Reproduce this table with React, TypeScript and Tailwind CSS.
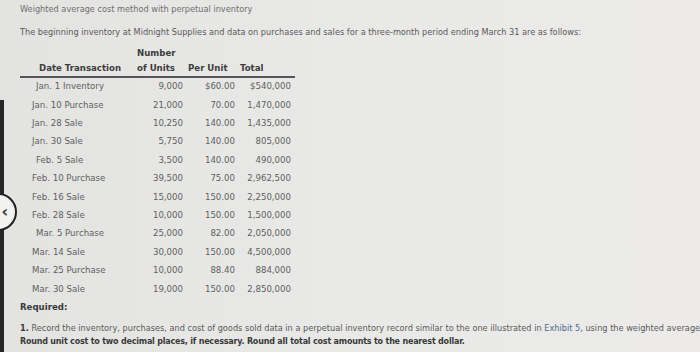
const rows = [
  { date: 'Jan. 1', what: 'Inventory', units: '9,000', per: '$60.00', total: '$540,000', short: true },
  { date: 'Jan. 10', what: 'Purchase', units: '21,000', per: '70.00', total: '1,470,000' },
  { date: 'Jan. 28', what: 'Sale', units: '10,250', per: '140.00', total: '1,435,000' },
  { date: 'Jan. 30', what: 'Sale', units: '5,750', per: '140.00', total: '805,000' },
  { date: 'Feb. 5', what: 'Sale', units: '3,500', per: '140.00', total: '490,000', short: true },
  { date: 'Feb. 10', what: 'Purchase', units: '39,500', per: '75.00', total: '2,962,500' },
  { date: 'Feb. 16', what: 'Sale', units: '15,000', per: '150.00', total: '2,250,000' },
  { date: 'Feb. 28', what: 'Sale', units: '10,000', per: '150.00', total: '1,500,000' },
  { date: 'Mar. 5', what: 'Purchase', units: '25,000', per: '82.00', total: '2,050,000', short: true },
  { date: 'Mar. 14', what: 'Sale', units: '30,000', per: '150.00', total: '4,500,000' },
  { date: 'Mar. 25', what: 'Purchase', units: '10,000', per: '88.40', total: '884,000' },
  { date: 'Mar. 30', what: 'Sale', units: '19,000', per: '150.00', total: '2,850,000' },
];

export default function App() {
  return (
    <div
      className="relative h-[352px] w-[700px] overflow-hidden bg-gradient-to-r from-[#e3e3e1] via-[#e9e9e7] to-[#ecebe9] text-[8.2px] text-[#5f5f5f]"
      style={{ fontFamily: '"DejaVu Sans", Verdana, sans-serif' }}
    >
      {/* dark screen edge + back button */}
      <div className="absolute bottom-0 left-0 top-[100px] w-[4px] bg-[#262626]" />
      <div className="absolute left-[-21px] top-[193px] flex h-[38px] w-[38px] items-center justify-end rounded-full border-2 border-[#222] bg-[#f2f2f0] pr-[7px] text-[16px] font-bold leading-none text-[#333]">
        ‹
      </div>

      <div className="pl-[20px] pt-[3px]">
        <p className="leading-[12px] text-[#6e6e6e]">Weighted average cost method with perpetual inventory</p>
        <p className="mt-[11px] leading-[12px] text-[#5a5a5a]">
          The beginning inventory at Midnight Supplies and data on purchases and sales for a three-month period ending March 31 are as follows:
        </p>

        <div className="mt-[8px] w-[275px] text-[8.6px]">
          <div className="grid grid-cols-[110px_53px_52px_60px] font-bold text-[#3d3d3d]">
            <div />
            <div className="pl-[7px] leading-[15px]">Number</div>
            <div />
            <div />
            <div className="pl-[19px] leading-[15px]">Date Transaction</div>
            <div className="pl-[7px] leading-[15px]">of Units</div>
            <div className="pl-[5px] leading-[15px]">Per Unit</div>
            <div className="pl-[5px] leading-[15px]">Total</div>
          </div>
          <div className="h-[1.5px] bg-[#555]" />
          <div>
            {rows.map((r) => (
              <div key={r.date} className="grid h-[18.4px] grid-cols-[110px_53px_52px_60px] items-center">
                <div className={r.short ? 'pl-[16px]' : 'pl-[12px]'}>
                  {r.date} {r.what}
                </div>
                <div className="text-right">{r.units}</div>
                <div className="text-right">{r.per}</div>
                <div className="pr-[4px] text-right">{r.total}</div>
              </div>
            ))}
          </div>
        </div>

        <p className="mt-[3px] text-[8.6px] font-bold leading-[12px] text-[#3a3a3a]">Required:</p>
        <p className="mt-[8px] whitespace-nowrap leading-[14px] text-[#5a5a5a]">
          <span className="font-bold text-[#3a3a3a]">1.</span> Record the inventory, purchases, and cost of goods sold data in a perpetual inventory record similar to the one illustrated in{' '}
          <span className="text-[#4a6b8f]">Exhibit 5</span>, using the weighted average
        </p>
        <p className="text-[8px] font-bold leading-[14px] tracking-[-0.2px] text-[#3a3a3a]">
          Round unit cost to two decimal places, if necessary. Round all total cost amounts to the nearest dollar.
        </p>
      </div>
    </div>
  );
}
